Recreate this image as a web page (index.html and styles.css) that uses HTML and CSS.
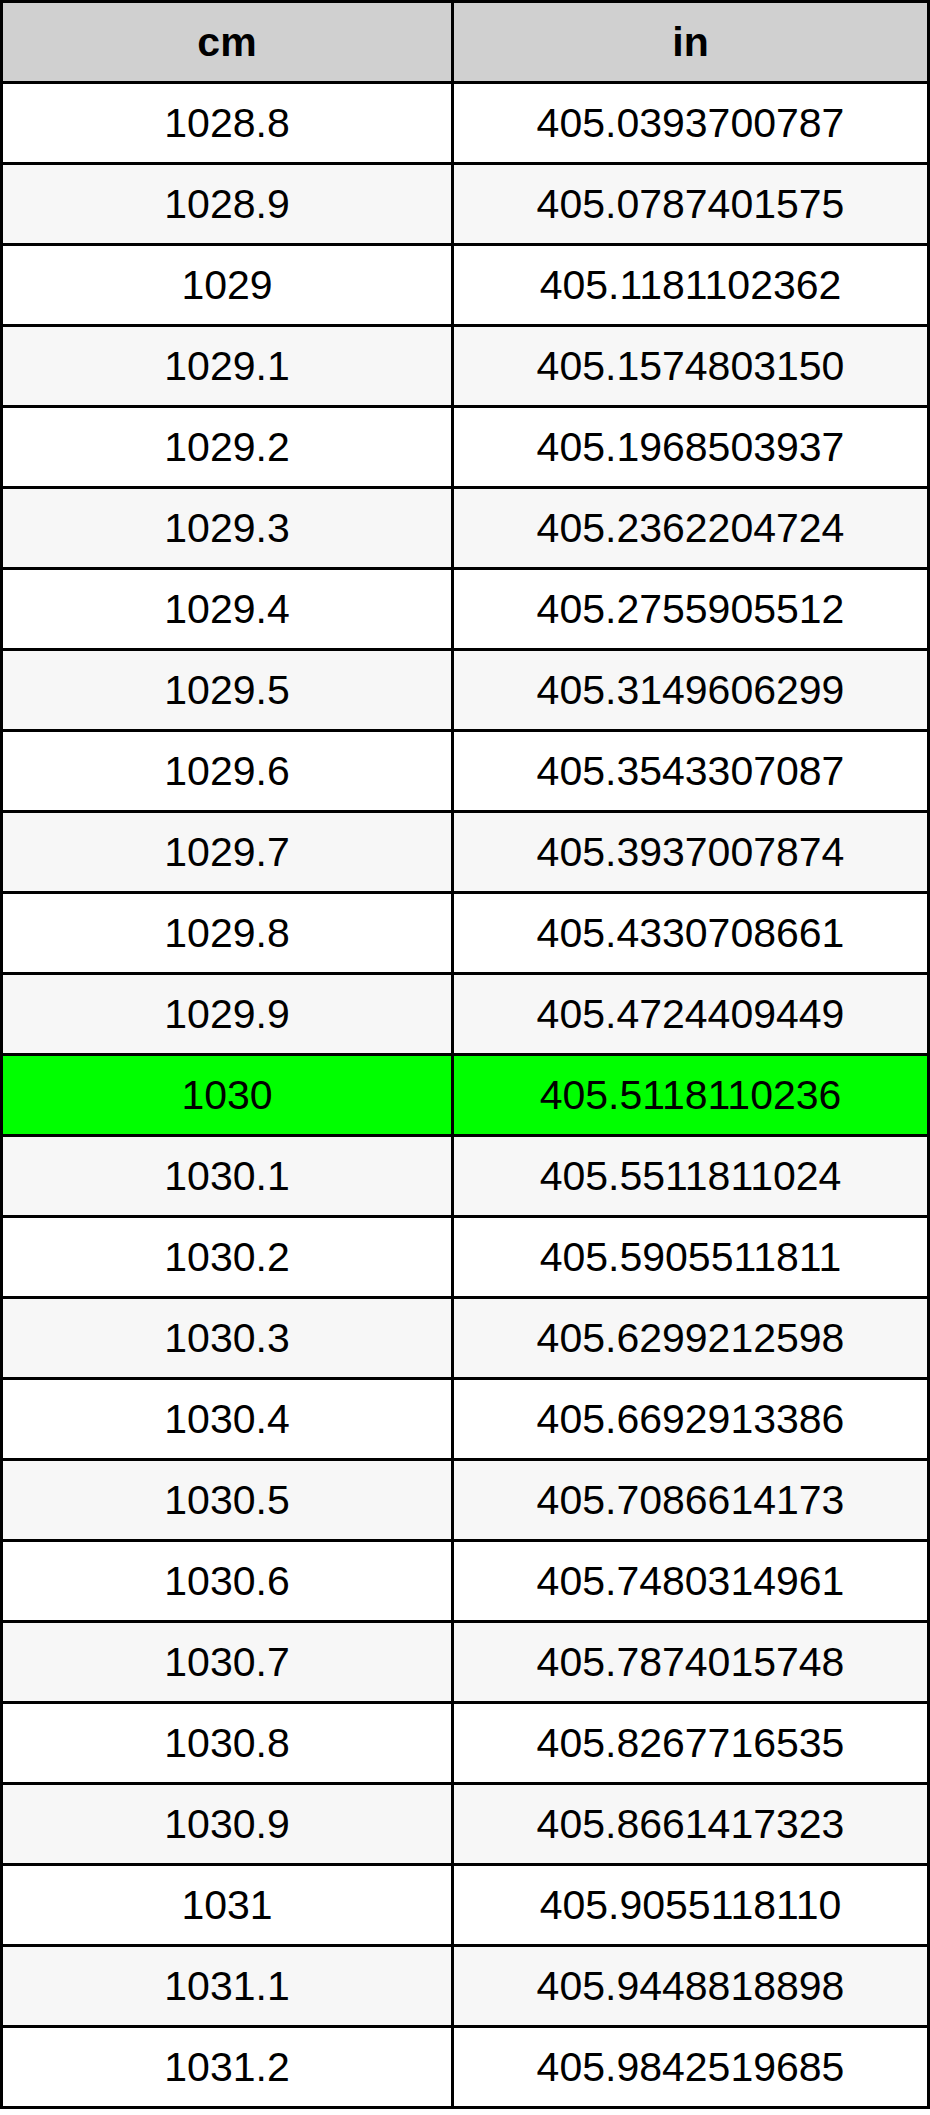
FILE: index.html
```html
<!DOCTYPE html>
<html>
<head>
<meta charset="utf-8">
<link rel="stylesheet" href="styles.css">
</head>
<body>
<table class="conv">
<thead>
<tr><th class="c1">cm</th><th class="c2">in</th></tr>
</thead>
<tbody>
<tr><td>1028.8</td><td>405.0393700787</td></tr>
<tr class="alt"><td>1028.9</td><td>405.0787401575</td></tr>
<tr><td>1029</td><td>405.1181102362</td></tr>
<tr class="alt"><td>1029.1</td><td>405.1574803150</td></tr>
<tr><td>1029.2</td><td>405.1968503937</td></tr>
<tr class="alt"><td>1029.3</td><td>405.2362204724</td></tr>
<tr><td>1029.4</td><td>405.2755905512</td></tr>
<tr class="alt"><td>1029.5</td><td>405.3149606299</td></tr>
<tr><td>1029.6</td><td>405.3543307087</td></tr>
<tr class="alt"><td>1029.7</td><td>405.3937007874</td></tr>
<tr><td>1029.8</td><td>405.4330708661</td></tr>
<tr class="alt"><td>1029.9</td><td>405.4724409449</td></tr>
<tr class="hl"><td>1030</td><td>405.5118110236</td></tr>
<tr class="alt"><td>1030.1</td><td>405.5511811024</td></tr>
<tr><td>1030.2</td><td>405.5905511811</td></tr>
<tr class="alt"><td>1030.3</td><td>405.6299212598</td></tr>
<tr><td>1030.4</td><td>405.6692913386</td></tr>
<tr class="alt"><td>1030.5</td><td>405.7086614173</td></tr>
<tr><td>1030.6</td><td>405.7480314961</td></tr>
<tr class="alt"><td>1030.7</td><td>405.7874015748</td></tr>
<tr><td>1030.8</td><td>405.8267716535</td></tr>
<tr class="alt"><td>1030.9</td><td>405.8661417323</td></tr>
<tr><td>1031</td><td>405.9055118110</td></tr>
<tr class="alt"><td>1031.1</td><td>405.9448818898</td></tr>
<tr><td>1031.2</td><td>405.9842519685</td></tr>
</tbody>
</table>
</body>
</html>
```

FILE: styles.css
```css
html, body {
  margin: 0;
  padding: 0;
  background: #ffffff;
}

.conv {
  width: 930px;
  table-layout: fixed;
  border-collapse: separate;
  border-spacing: 0;
  border-top: 3px solid #000;
  border-left: 3px solid #000;
  font-family: "Liberation Sans", Arial, sans-serif;
  font-size: 41px;
  color: #000;
}

.conv th,
.conv td {
  box-sizing: border-box;
  height: 81px;
  padding: 0;
  border-right: 3px solid #000;
  border-bottom: 3px solid #000;
  text-align: center;
  vertical-align: middle;
  line-height: 1;
  background: #ffffff;
}

.conv th {
  background: #d0d0d0;
  font-weight: bold;
}

.conv .c1 {
  width: 451px;
}

.conv .alt td {
  background: #f7f7f7;
}

.conv .hl td {
  background: #00ff00;
}
```
